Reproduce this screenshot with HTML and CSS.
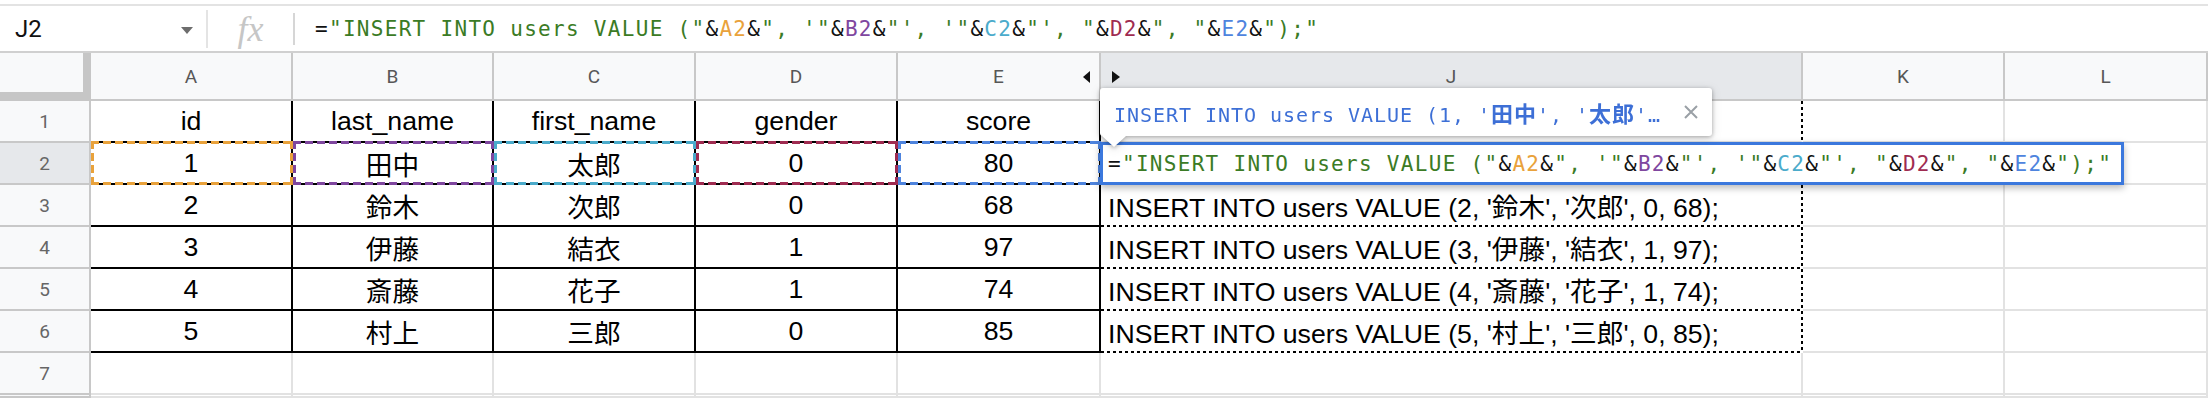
FILE: index.html
```html
<!DOCTYPE html>
<html lang="ja">
<head>
    <meta charset="UTF-8">
    <meta name="viewport" content="width=device-width, initial-scale=1.0">
    <title>users - Sheet</title>
    <link rel="stylesheet" href="styles.css">
</head>
<body>

    <!-- Formula bar -->
    <div class="formula-bar">
        <div class="name-box"><span>J2</span><span class="caret"></span></div>
        <div class="sep sep-tall"></div>
        <div class="fx">fx</div>
        <div class="sep"></div>
        <div class="formula"><span class="op">=</span><span class="s">"INSERT INTO users VALUE ("</span>&amp;<span class="ra">A2</span>&amp;<span class="s">", '"</span>&amp;<span class="rb">B2</span>&amp;<span class="s">"', '"</span>&amp;<span class="rc">C2</span>&amp;<span class="s">"', "</span>&amp;<span class="rd">D2</span>&amp;<span class="s">", "</span>&amp;<span class="re">E2</span>&amp;<span class="s">");"</span></div>
    </div>

    <!-- Grid -->
    <div class="sheet">
        <!-- column headers -->
        <div class="corner"></div>
        <div class="ch">A</div>
        <div class="ch">B</div>
        <div class="ch">C</div>
        <div class="ch">D</div>
        <div class="ch hid-r">E</div>
        <div class="ch sel hid-l">J</div>
        <div class="ch">K</div>
        <div class="ch">L</div>

        <!-- row 1 -->
        <div class="rh">1</div>
        <div class="c t">id</div>
        <div class="c t">last_name</div>
        <div class="c t">first_name</div>
        <div class="c t">gender</div>
        <div class="c t">score</div>
        <div class="c j-top">
            <div class="popup">
                <span class="popup-text">INSERT INTO users VALUE (1, '<span class="k">田中</span>', '<span class="k">太郎</span>'…</span>
                <svg class="close" width="16" height="16" viewBox="0 0 16 16"><path d="M2 2L14 14M14 2L2 14" stroke="#9aa0a6" stroke-width="2" fill="none"/></svg>
            </div>
        </div>
        <div class="c"></div>
        <div class="c"></div>

        <!-- row 2 -->
        <div class="rh sel">2</div>
        <div class="c t ref ref-a">1</div>
        <div class="c t ref ref-b">田中</div>
        <div class="c t ref ref-c">太郎</div>
        <div class="c t ref ref-d">0</div>
        <div class="c t ref ref-e">80</div>
        <div class="c active">
            <div class="editor"><span class="op">=</span><span class="s">"INSERT INTO users VALUE ("</span>&amp;<span class="ra">A2</span>&amp;<span class="s">", '"</span>&amp;<span class="rb">B2</span>&amp;<span class="s">"', '"</span>&amp;<span class="rc">C2</span>&amp;<span class="s">"', "</span>&amp;<span class="rd">D2</span>&amp;<span class="s">", "</span>&amp;<span class="re">E2</span>&amp;<span class="s">");"</span></div>
        </div>
        <div class="c"></div>
        <div class="c"></div>

        <!-- row 3 -->
        <div class="rh">3</div>
        <div class="c t">2</div>
        <div class="c t">鈴木</div>
        <div class="c t">次郎</div>
        <div class="c t">0</div>
        <div class="c t">68</div>
        <div class="c j">INSERT INTO users VALUE (2, '鈴木', '次郎', 0, 68);</div>
        <div class="c"></div>
        <div class="c"></div>

        <!-- row 4 -->
        <div class="rh">4</div>
        <div class="c t">3</div>
        <div class="c t">伊藤</div>
        <div class="c t">結衣</div>
        <div class="c t">1</div>
        <div class="c t">97</div>
        <div class="c j">INSERT INTO users VALUE (3, '伊藤', '結衣', 1, 97);</div>
        <div class="c"></div>
        <div class="c"></div>

        <!-- row 5 -->
        <div class="rh">5</div>
        <div class="c t">4</div>
        <div class="c t">斎藤</div>
        <div class="c t">花子</div>
        <div class="c t">1</div>
        <div class="c t">74</div>
        <div class="c j">INSERT INTO users VALUE (4, '斎藤', '花子', 1, 74);</div>
        <div class="c"></div>
        <div class="c"></div>

        <!-- row 6 -->
        <div class="rh">6</div>
        <div class="c t">5</div>
        <div class="c t">村上</div>
        <div class="c t">三郎</div>
        <div class="c t">0</div>
        <div class="c t">85</div>
        <div class="c j">INSERT INTO users VALUE (5, '村上', '三郎', 0, 85);</div>
        <div class="c"></div>
        <div class="c"></div>

        <!-- row 7 -->
        <div class="rh">7</div>
        <div class="c"></div>
        <div class="c"></div>
        <div class="c"></div>
        <div class="c"></div>
        <div class="c"></div>
        <div class="c"></div>
        <div class="c"></div>
        <div class="c"></div>

        <!-- row 8 (only its top edge is in view) -->
        <div class="rh"></div>
        <div class="c"></div>
        <div class="c"></div>
        <div class="c"></div>
        <div class="c"></div>
        <div class="c"></div>
        <div class="c"></div>
        <div class="c"></div>
        <div class="c"></div>
    </div>

</body>
</html>
```

FILE: styles.css
```css
* {
    box-sizing: border-box;
}
html, body {
    margin: 0;
    height: 398px;
    overflow: hidden;
    background: #fff;
}
body {
    font-family: "Liberation Sans", Arial, "Noto Sans CJK JP", sans-serif;
    color: #000;
}

/* Formula bar */
.formula-bar {
    margin-top: 4px;
    height: 49px;
    border-top: 2px solid #e3e3e3;
    border-bottom: 2px solid #d0d0d0;
    display: flex;
    align-items: center;
}
.name-box {
    width: 206px;
    padding: 0 13px 0 15px;
    display: flex;
    justify-content: space-between;
    align-items: center;
    font-family: Roboto, "Liberation Sans", sans-serif;
    font-size: 24px;
    color: #111;
}
.caret {
    width: 0;
    height: 0;
    border-left: 6.5px solid transparent;
    border-right: 6.5px solid transparent;
    border-top: 7px solid #6d6d6d;
    margin-top: 3px;
}
.sep {
    width: 2px;
    height: 32px;
    margin-top: 1px;
    background: #d6d6d6;
}
.sep-tall {
    height: 38px;
    margin-top: 0;
    background: #e4e4e4;
}
.fx {
    width: 85px;
    text-align: center;
    font-family: "Liberation Serif", serif;
    font-style: italic;
    font-size: 36px;
    line-height: 1;
    color: #c6c6c6;
}
.formula {
    padding-left: 20px;
    font-family: "DejaVu Sans Mono", monospace;
    font-size: 21px;
    letter-spacing: 1.3px;
    white-space: pre;
    color: #111;
}

/* Formula highlighting */
.s { color: #3b7b25; }
.ra { color: #e9a23b; }
.rb { color: #7f479f; }
.rc { color: #4babcb; }
.rd { color: #9f2c51; }
.re { color: #4e84de; }

/* Sheet grid */
.sheet {
    display: grid;
    grid-template-columns: 91px 202px 201px 202px 202px 203px 702px 202px 1fr;
    grid-template-rows: 48px repeat(7, 42px) 3px;
}
.corner {
    background: #f8f9fa;
    border-right: 8px solid #c6c6c6;
    border-bottom: 9px solid #c6c6c6;
}
.ch, .rh {
    display: flex;
    align-items: center;
    justify-content: center;
    background: #f8f9fa;
    border-right: 2px solid #c8c8c8;
    border-bottom: 2px solid #c8c8c8;
    font-family: Roboto, "Liberation Sans", sans-serif;
    font-size: 19px;
    color: #575757;
    position: relative;
}
.rh {
    color: #666;
}
.ch.sel, .rh.sel {
    background: #e6e8eb;
}

/* hidden columns F-I markers */
.hid-r::after {
    content: "";
    position: absolute;
    right: 9px;
    top: 18px;
    border-top: 6px solid transparent;
    border-bottom: 6px solid transparent;
    border-right: 7px solid #111;
}
.hid-l::before {
    content: "";
    position: absolute;
    left: 11px;
    top: 18px;
    border-top: 6px solid transparent;
    border-bottom: 6px solid transparent;
    border-left: 8px solid #111;
}

.c {
    position: relative;
    display: flex;
    align-items: center;
    border-right: 2px solid #e2e2e2;
    border-bottom: 2px solid #e2e2e2;
    font-size: 26.67px;
    white-space: nowrap;
}
.t {
    justify-content: center;
    border-right-color: #000;
    border-bottom-color: #000;
}

/* dotted borders on column J */
.j, .j-top {
    padding-left: 7px;
    border-right-color: transparent;
    background-origin: border-box;
}
.j {
    border-bottom-color: transparent;
    background:
        repeating-linear-gradient(180deg, #000 0 3px, transparent 3px 6px) right top / 2px 100% no-repeat border-box,
        repeating-linear-gradient(90deg, #000 0 3px, transparent 3px 6px) left bottom / 100% 2px no-repeat border-box;
}
.j-top {
    background: repeating-linear-gradient(180deg, #000 0 3px, transparent 3px 6px) right top / 2px 100% no-repeat border-box;
}

/* range highlights for the references in J2 */
.ref::after {
    content: "";
    position: absolute;
    top: -2px;
    left: 0;
    right: -2px;
    bottom: -2px;
    z-index: 1;
    background:
        repeating-linear-gradient(90deg, var(--dc) 0 8px, transparent 8px 12px) left top / 100% 3px no-repeat,
        repeating-linear-gradient(90deg, var(--dc) 0 8px, transparent 8px 12px) left bottom / 100% 3px no-repeat,
        repeating-linear-gradient(180deg, var(--dc) 0 8px, transparent 8px 12px) left top / 3px 100% no-repeat,
        repeating-linear-gradient(180deg, var(--dc) 0 8px, transparent 8px 12px) right top / 3px 100% no-repeat;
}
.ref-a { --dc: #e9a23b; }
.ref-b { --dc: #7f479f; }
.ref-c { --dc: #4babcb; }
.ref-d { --dc: #9f2c51; }
.ref-e { --dc: #4e84de; }

/* in-cell editor */
.editor {
    position: absolute;
    top: -1px;
    left: -1px;
    width: 1024px;
    height: 43px;
    z-index: 2;
    display: flex;
    align-items: center;
    padding-left: 5px;
    background: #fff;
    border: 3px solid #3b78dd;
    box-shadow: 0 3px 7px rgba(0, 0, 0, 0.28);
    font-family: "DejaVu Sans Mono", monospace;
    font-size: 21px;
    letter-spacing: 1.3px;
    white-space: pre;
    color: #111;
}

/* formula result preview */
.popup {
    position: absolute;
    top: -13px;
    left: -1px;
    width: 612px;
    height: 48px;
    z-index: 3;
    display: flex;
    align-items: center;
    justify-content: space-between;
    padding: 0 13px 0 14px;
    background: #fff;
    border-radius: 3px;
    filter: drop-shadow(0 1px 2px rgba(0, 0, 0, 0.3)) drop-shadow(0 2px 5px rgba(0, 0, 0, 0.12));
}
.popup::after {
    content: "";
    position: absolute;
    left: 2px;
    top: 100%;
    border-left: 12px solid transparent;
    border-right: 12px solid transparent;
    border-top: 11px solid #fff;
}
.popup-text {
    font-family: "DejaVu Sans Mono", monospace;
    font-size: 20px;
    letter-spacing: 0.96px;
    white-space: pre;
    color: #3d6fd6;
}
.popup-text .k {
    font-family: "Noto Sans CJK JP", sans-serif;
    font-weight: 700;
    font-size: 22px;
    letter-spacing: 1px;
}
.close {
    display: block;
}
```
